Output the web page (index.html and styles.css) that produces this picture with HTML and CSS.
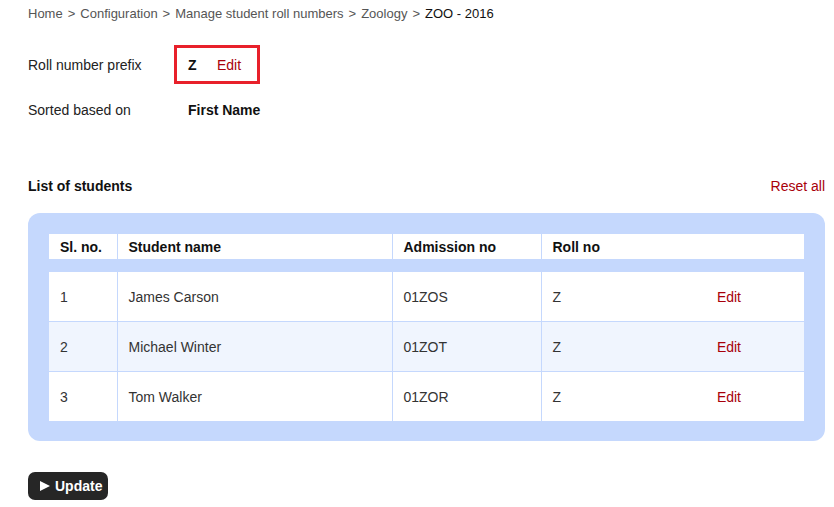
FILE: index.html
```html
<!DOCTYPE html>
<html>
<head>
<meta charset="utf-8">
<link rel="stylesheet" href="styles.css">
</head>
<body>
<div class="page">
  <nav class="crumbs">
    <span>Home</span><span class="sep">&gt;</span><span>Configuration</span><span class="sep">&gt;</span><span>Manage student roll numbers</span><span class="sep">&gt;</span><span>Zoology</span><span class="sep">&gt;</span><span class="current">ZOO - 2016</span>
  </nav>

  <div class="field prefix-row">
    <div class="label">Roll number prefix</div>
    <div class="prefix-box">
      <span class="val">Z</span>
      <a class="link">Edit</a>
    </div>
  </div>

  <div class="field sort-row">
    <div class="label">Sorted based on</div>
    <div class="val sort-val">First Name</div>
  </div>

  <div class="list-head">
    <div class="list-title">List of students</div>
    <a class="link">Reset all</a>
  </div>

  <div class="panel">
    <table class="grid">
      <colgroup>
        <col class="c1"><col class="c2"><col class="c3"><col class="c4">
      </colgroup>
      <thead>
        <tr><th>Sl. no.</th><th>Student name</th><th>Admission no</th><th>Roll no</th></tr>
      </thead>
      <tbody>
        <tr class="spacer"><td colspan="4"></td></tr>
        <tr><td>1</td><td>James Carson</td><td>01ZOS</td><td><div class="roll"><span>Z</span><a class="link">Edit</a></div></td></tr>
        <tr class="alt"><td>2</td><td>Michael Winter</td><td>01ZOT</td><td><div class="roll"><span>Z</span><a class="link">Edit</a></div></td></tr>
        <tr><td>3</td><td>Tom Walker</td><td>01ZOR</td><td><div class="roll"><span>Z</span><a class="link">Edit</a></div></td></tr>
      </tbody>
    </table>
  </div>

  <button class="update"><svg class="tri" width="10" height="10" viewBox="0 0 10 10"><path d="M0 0 L10 5 L0 10 Z" fill="#fff"/></svg><span>Update</span></button>
</div>
</body>
</html>
```

FILE: styles.css
```css
html, body {
  margin: 0;
  padding: 0;
  background: #fff;
}
body {
  font-family: "Liberation Sans", Arial, sans-serif;
  font-size: 14px;
  color: #333;
}
.page {
  padding: 0 9px 0 28px;
}
.crumbs {
  padding-top: 5px;
  height: 18px;
  line-height: 18px;
  font-size: 13px;
  color: #555;
  display: flex;
  white-space: nowrap;
}
.crumbs .sep {
  margin: 0 5px;
}
.crumbs .current {
  color: #111;
}
.field {
  display: flex;
  align-items: center;
}
.label {
  width: 146px;
  color: #222;
}
.prefix-row {
  margin-top: 22px;
}
.prefix-box {
  border: 3px solid #e8202a;
  display: flex;
  align-items: center;
  padding-left: 11px;
  box-sizing: border-box;
  width: 86px;
  height: 39px;
}
.val {
  font-weight: bold;
  color: #111;
}
.prefix-box .val {
  width: 29px;
}
.link {
  color: #a8000a;
  text-decoration: none;
  cursor: pointer;
}
.sort-row {
  margin-top: 18px;
  line-height: 16px;
}
.sort-val {
  padding-left: 14px;
}
.list-head {
  margin-top: 60px;
  display: flex;
  justify-content: space-between;
  align-items: center;
  line-height: 16px;
}
.list-title {
  font-weight: bold;
  color: #111;
}
.panel {
  margin-top: 19px;
  background: #c5d8fd;
  border-radius: 12px;
  padding: 21px 21px 20px 21px;
}
.grid {
  width: 100%;
  border-collapse: collapse;
  background: #fff;
  table-layout: fixed;
}
.c1 { width: 68px; }
.c2 { width: 275px; }
.c3 { width: 149px; }
.grid th {
  height: 25px;
  padding: 0 0 0 11px;
  text-align: left;
  font-weight: bold;
  color: #111;
  border-left: 1px solid #c5d8fd;
}
.grid th:first-child,
.grid td:first-child {
  border-left: none;
}
.grid td {
  height: 49px;
  padding: 0 0 0 11px;
  border-left: 1px solid #c5d8fd;
  border-top: 1px solid #c5d8fd;
  color: #333;
}
.grid tr.spacer td {
  height: 13px;
  padding: 0;
  background: #c5d8fd;
  border: none;
}
.grid tr.spacer + tr td {
  border-top: none;
}
.grid tr.alt td {
  background: #f0f5fe;
}
.roll {
  display: flex;
  justify-content: space-between;
  padding-right: 63px;
}
.update {
  margin-top: 31px;
  background: #262626;
  color: #fff;
  border: none;
  border-radius: 7px;
  font-family: "Liberation Sans", Arial, sans-serif;
  font-weight: bold;
  font-size: 14px;
  height: 28px;
  width: 80px;
  padding: 0 0 0 12px;
  display: flex;
  align-items: center;
  justify-content: flex-start;
}
.update .tri {
  margin-right: 5px;
}
```
